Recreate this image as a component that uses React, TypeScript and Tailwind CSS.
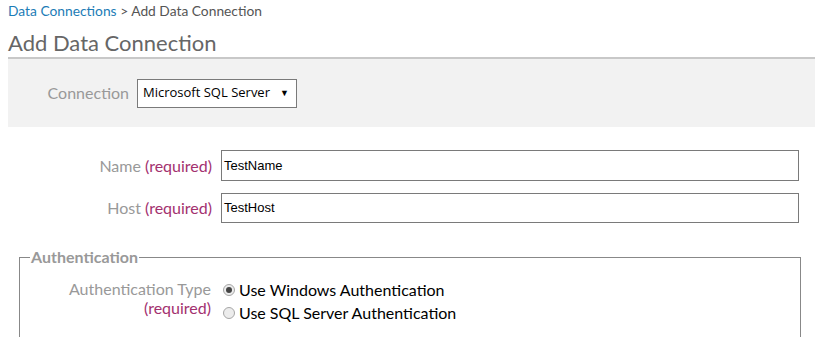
export default function App() {
  return (
    <div className="min-h-screen bg-white pl-2 font-['Lato','Open_Sans',sans-serif]">
      {/* breadcrumb */}
      <div className="pt-[3px] text-[13.8px] leading-[16px] text-[#555]">
        <span className="text-[#1c7cb6]">Data Connections</span>
        <span> &gt; Add Data Connection</span>
      </div>

      <h1 className="mt-[11px] text-[22px] leading-[26px] font-normal text-[#666]">Add Data Connection</h1>

      <div className="mt-[1px] mr-[2px] flex h-[70px] items-center border-t-2 border-[#c8c8c8] bg-[#f2f2f2]">
        <label className="w-[121px] text-right text-[16px] text-[#999]">Connection</label>
        <div className="ml-2 flex h-[29px] w-[160px] items-center justify-between border border-[#7a7a7a] bg-white pr-[7px] pl-[5px] font-['Open_Sans',sans-serif] text-[13px] text-black">
          <span>Microsoft SQL Server</span>
          <span className="text-[9px]">▼</span>
        </div>
      </div>

      <div className="mt-[23px] flex flex-col gap-3 pr-[18px]">
        <div className="flex items-center">
          <label className="w-[204px] text-right text-[16px] text-[#999]">
            Name <span className="text-[#a3316f]">(required)</span>
          </label>
          <div className="ml-[9px] flex h-[31px] flex-1 items-center border border-[#7a7a7a] bg-white px-[2px] font-['Liberation_Sans',Arial,sans-serif] text-[13px] text-black">
            TestName
          </div>
        </div>
        <div className="flex items-center">
          <label className="w-[204px] text-right text-[16px] text-[#999]">
            Host <span className="text-[#a3316f]">(required)</span>
          </label>
          <div className="ml-[9px] flex h-[30px] flex-1 items-center border border-[#7a7a7a] bg-white px-[2px] font-['Liberation_Sans',Arial,sans-serif] text-[13px] text-black">
            TestHost
          </div>
        </div>
      </div>

      <fieldset className="mt-[25px] mr-4 ml-[11px] border border-[#888] px-[10px] pb-6">
        <legend className="px-[1px] text-[16px] leading-[18px] font-bold text-[#999]">Authentication</legend>
        <div className="mt-[13px] flex items-start">
          <div className="w-[181px] text-right text-[16px] leading-[19px] text-[#999]">
            <div>Authentication Type</div>
            <div className="text-[#a3316f]">(required)</div>
          </div>
          <div className="-mt-[1px] ml-3 flex flex-col text-[16px] leading-[23px] text-black">
            <label className="flex items-center">
              <span className="mr-[4px] flex h-[12px] w-[12px] items-center justify-center rounded-full border border-[#a6a6a6] bg-[#ececec]">
                <span className="h-[6px] w-[6px] rounded-full bg-[#444]" />
              </span>
              Use Windows Authentication
            </label>
            <label className="flex items-center">
              <span className="mr-[4px] h-[12px] w-[12px] rounded-full border border-[#a6a6a6] bg-[#ececec]" />
              Use SQL Server Authentication
            </label>
          </div>
        </div>
      </fieldset>
    </div>
  );
}
